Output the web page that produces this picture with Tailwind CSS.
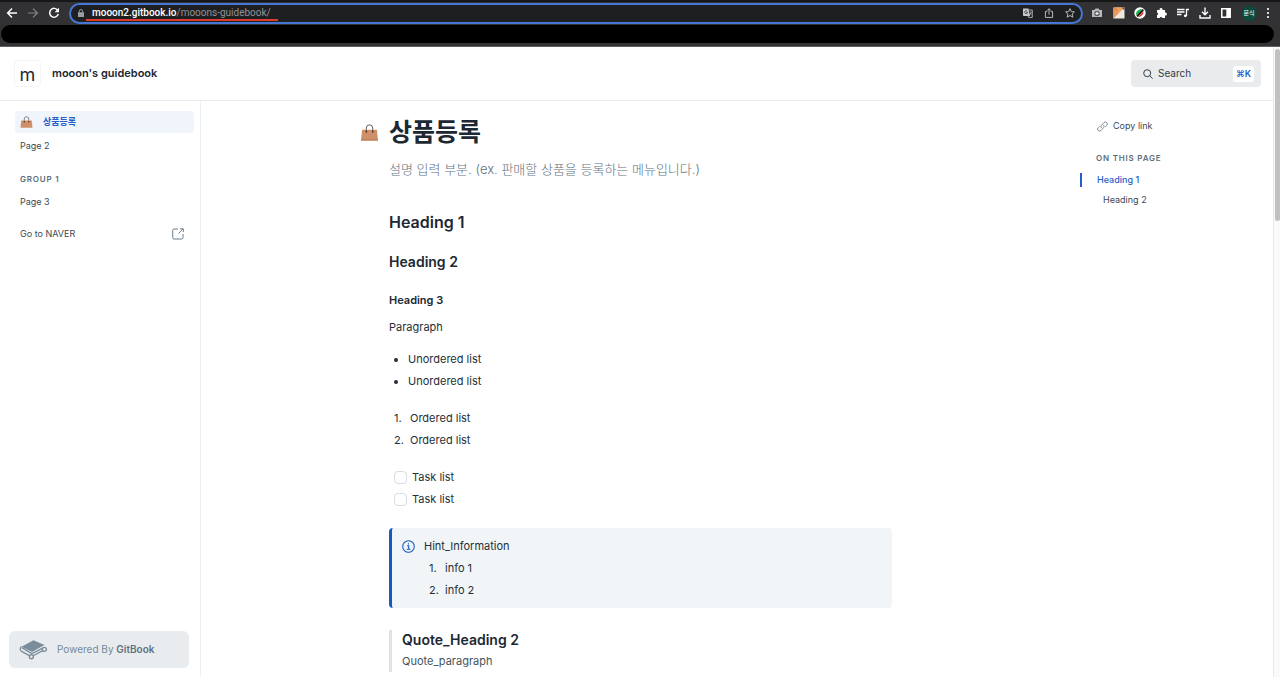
<!DOCTYPE html>
<html lang="ko">
<head>
    <meta charset="UTF-8">
    <meta name="viewport" content="width=device-width, initial-scale=1.0">
    <title>상품등록 - mooon's guidebook</title>
    <script src="https://cdn.jsdelivr.net/npm/@tailwindcss/browser@4"></script>
</head>
<body class="h-screen overflow-hidden flex flex-col bg-white font-['Inter','Noto_Sans_CJK_KR',sans-serif] text-[#242f38]">

    <!-- Browser toolbar -->
    <div class="shrink-0 bg-[#323234] border-t-2 border-t-[#161616] border-b border-b-[#606062]">
        <div class="flex items-center h-[22px] pr-[10px]">
            <div class="flex items-center gap-[9px] pl-[6px] pr-[9px]">
                <button type="button" aria-label="Back" class="text-white">
                    <svg class="size-3" viewBox="0 0 12 12" fill="none" stroke="currentColor" stroke-width="1.4"><path d="M11 6H2M6 1.6 1.6 6 6 10.4"/></svg>
                </button>
                <button type="button" aria-label="Forward" class="text-[#858587]">
                    <svg class="size-3" viewBox="0 0 12 12" fill="none" stroke="currentColor" stroke-width="1.2"><path d="M1 6h9M6 1.6 10.4 6 6 10.4"/></svg>
                </button>
                <button type="button" aria-label="Reload" class="text-white">
                    <svg class="size-3" viewBox="0 0 12 12" fill="none" stroke="currentColor" stroke-width="1.5"><path d="M9.8 3.4A4.4 4.4 0 1 0 10.3 7"/><path d="M11 .8v4.4H6.6z" fill="currentColor" stroke="none"/></svg>
                </button>
            </div>
            <div class="flex-1 h-[21px] flex items-center rounded-full border-2 border-[#4677d6] bg-[#1e1f21] pl-[6px] pr-[6px]">
                <svg class="w-2 h-2 mr-[7px] text-[#9a9da1]" viewBox="0 0 8 8" fill="currentColor"><path d="M1 3.2h6V8H1z"/><path d="M2.300 3.500V2.300a1.700 1.700 0 0 1 3.400 0v1.200" fill="none" stroke="currentColor"/></svg>
                <div class="border-b-2 border-[#e23a2c] -ml-[6px] pl-[6px] pr-[7px] h-[15px] leading-[14px] font-['Roboto',sans-serif] text-[10px] text-[#8f9296]"><span class="text-white font-medium">mooon2.gitbook.io</span>/mooons-guidebook/</div>
                <div class="ml-auto flex items-center gap-[11px] text-[#c9cacc]">
                    <button type="button" aria-label="Translate">
                        <svg class="size-[10px]" viewBox="0 0 10 10"><path d="M0 .5h5.500L7 8H.8a.8.8 0 0 1-.8-.8z" fill="#c9cacc"/><path d="M6 2h3.300v7.400H5.600L5 8" fill="none" stroke="#c9cacc" stroke-width=".8"/><path d="M4.300 3.200a1.500 1.500 0 1 0 .3 1.300H3.200" fill="none" stroke="#1e1f21" stroke-width=".7"/><path d="M6.800 4h2M8.300 4.200 6.900 6.800M7 5l1.400 1.800" fill="none" stroke="#c9cacc" stroke-width=".6"/></svg>
                    </button>
                    <button type="button" aria-label="Share">
                        <svg class="size-[10px]" viewBox="0 0 10 10" fill="none" stroke="currentColor" stroke-width=".9"><path d="M3.200 3.600H1.400v5.800h7.200V3.600H6.800M5 6.600V.9M3 2.700l2-2 2 2"/></svg>
                    </button>
                    <button type="button" aria-label="Bookmark">
                        <svg class="size-[10px]" viewBox="0 0 10 10" fill="none" stroke="currentColor" stroke-width=".9" stroke-linejoin="round"><path d="m5 .7 1.300 2.900 3.100.3-2.300 2.100.7 3.200L5 7.500 2.200 9.200l.7-3.200L.6 3.900l3.100-.3z"/></svg>
                    </button>
                </div>
            </div>
            <div class="w-[179px] ml-2 flex items-center justify-between text-white">
                <svg class="size-3" viewBox="0 0 12 12"><path d="M1 3h2.500l1-1.500h3l1 1.500H11v7H1z" fill="#b9babb"/><circle cx="6" cy="6.400" r="2.700" fill="#5d5e60"/><path d="M6 4.800V8M4.400 6.400h3.200" stroke="#fff"/></svg>
                <svg class="size-3" viewBox="0 0 12 12"><path d="M.5.5h11v11H.5z" fill="#f0e9df"/><path d="M.5.5H8l-7.500 11z" fill="#d98a4a"/><path d="M3 .5h8.500L6 6z" fill="#eda35c"/><path d="M.5.500 6 6 .5 11.500z" fill="#e9995a"/><path d="M8.500.5h3v3z" fill="#555"/></svg>
                <svg class="size-3" viewBox="0 0 12 12"><circle cx="6" cy="6" r="5.700" fill="#fff"/><path d="M2 8C1.500 4.500 4.500 2 8 2L4.500 7z" fill="#27b44a"/><path d="M9.500 4 4 10c3.500 0 5.500-2.500 5.500-6z" fill="#e5322d"/><path d="M9.300 2.600 3 9.300" stroke="#111" stroke-width="1.800"/></svg>
                <svg class="size-3" viewBox="0 0 12 12" fill="currentColor"><path d="M1 3h2.600a1.500 1.500 0 1 1 2.900 0H9v2.600a1.500 1.500 0 1 1 0 2.900V11H6.500a1.500 1.500 0 0 0-2.900 0H1V8.300a1.400 1.400 0 0 0 0-2.700z"/></svg>
                <svg class="size-3" viewBox="0 0 12 12" fill="none" stroke="currentColor" stroke-width="1.300"><path d="M0 2.500h7.500M0 5h7.500M0 7.500h4.500M9.500 9V2.500H12"/><circle cx="8.300" cy="8.800" r="1.400" fill="currentColor" stroke="none"/></svg>
                <svg class="size-3" viewBox="0 0 12 12" fill="none" stroke="currentColor" stroke-width="1.400"><path d="M6 .5v7M3 4.800l3 3 3-3M1 8v3h10V8"/></svg>
                <svg class="size-3" viewBox="0 0 12 12"><path d="M1.800 1.800h8.400v8.400H1.800z" fill="none" stroke="currentColor" stroke-width="1.500"/><path d="M6.300 2h4v8h-4z" fill="currentColor"/></svg>
                <span class="size-[15px] rounded-full bg-[#0b4a3c] flex items-center justify-center text-[6px] leading-none">문식</span>
                <svg class="w-1 h-3" viewBox="0 0 4 12" fill="currentColor"><circle cx="2" cy="2" r="1.100"/><circle cx="2" cy="6" r="1.100"/><circle cx="2" cy="10" r="1.100"/></svg>
            </div>
        </div>
        <div class="h-[18px] mt-[1px] mb-[3px] ml-[1px] mr-[6px] rounded-full bg-black"></div>
    </div>

    <div class="flex-1 min-h-0 flex">
        <div class="flex-1 min-w-0 flex flex-col">
            <header class="shrink-0 flex items-center h-[54px] pl-[14px] pr-3 border-b border-[#e7edf1]">
                <a href="#" class="flex items-center gap-[11px] text-[11px] font-semibold text-[#1c2833]">
                    <span class="size-[27px] flex items-center justify-center rounded-sm border border-[#f4f4f4] pt-[3px] text-[18px] leading-none font-normal">m</span>
                    mooon's guidebook
                </a>
                <button type="button" class="ml-auto flex items-center w-[130px] h-[27px] pl-3 pr-[7px] rounded bg-[#e9ebec] text-[10px] text-[#33404b]">
                    <svg class="size-[10px] mr-[5px]" viewBox="0 0 10 10" fill="none" stroke="currentColor"><circle cx="4.200" cy="4.200" r="3.500"/><path d="m6.800 6.800 2.800 2.800"/></svg>
                    Search
                    <kbd class="ml-auto flex items-center justify-center w-[21px] h-4 rounded-[3px] bg-white font-['Inter','DejaVu_Sans',sans-serif] text-[9px] font-semibold text-[#2560c9]">⌘K</kbd>
                </button>
            </header>

            <div class="flex-1 min-h-0 flex">
                <nav class="w-[201px] shrink-0 flex flex-col border-r border-[#eceff1] pt-[10px] text-[9px] text-[#3b4954]">
                    <a href="#" class="flex items-center h-[22px] ml-[15px] mr-[6px] pl-[5px] gap-[10px] rounded-sm bg-[#f0f4fb] font-bold text-[#2560c9]">
                        <svg class="w-[13px] h-3" viewBox="0 0 16 16"><path d="M5 8V4a3 3 0 0 1 6 0v4" fill="none" stroke="#6b6462"/><path d="M1 6h14l1 9.500H0z" fill="#cf9069"/><path d="M4.300 6.500h1.500v2H4.300zM10.300 6.500h1.500v2h-1.500z" fill="#4a2f25"/></svg>
                        상품등록
                    </a>
                    <a href="#" class="flex items-center h-[22px] mt-[2px] pl-5">Page 2</a>
                    <h5 class="flex items-center h-[22px] mt-[11px] pl-5 text-[8px] font-semibold tracking-widest text-[#5b6d7b]">GROUP 1</h5>
                    <a href="#" class="flex items-center h-[22px] mt-[1px] pl-5">Page 3</a>
                    <a href="#" class="flex items-center justify-between h-[22px] mt-[10px] pl-5 pr-4">
                        Go to NAVER
                        <svg class="size-3" viewBox="0 0 12 12" fill="none" stroke="#6d7d8a"><path d="M6 1H2A1.300 1.300 0 0 0 .7 2.300v7.400A1.300 1.300 0 0 0 2 11h7.700a1.300 1.300 0 0 0 1.300-1.300V6M6.500 5.500 11 1M8 .8h3.300V4"/></svg>
                    </a>
                    <a href="#" class="mt-auto mb-[9px] ml-[9px] mr-[11px] h-[37px] flex items-center pl-[10px] rounded-md bg-[#e8ecef] text-[10px] text-[#76899a]">
                        <svg class="w-7 h-5 mr-[10px]" viewBox="0 0 28 20"><path d="M14.500.3 25.500 5 13.800 11.600a1.600 1.600 0 0 1-1.500 0L2.500 6.700z" fill="#7b8d9b"/><path d="M2.600 6.500C.7 7.300.9 10.600 2.600 11.400l7.800 4.200M14.300 15.700l9.300-5.100M2.800 7.600l8.800 5.300c1 .5 1.900.4 2.800-.1l9.200-4.700" fill="none" stroke="#7b8d9b" stroke-width="1.300"/><circle cx="12.400" cy="16.800" r="2" fill="#e8ecef" stroke="#7b8d9b" stroke-width="1.400"/><circle cx="25.400" cy="9.400" r="2" fill="#e8ecef" stroke="#7b8d9b" stroke-width="1.400"/></svg>
                        <span>Powered By <b class="font-semibold text-[#5f7281]">GitBook</b></span>
                    </a>
                </nav>

                <main class="flex-1 min-w-0 pt-[15px]">
                    <article class="w-full max-w-[503px] mx-auto text-[11px] leading-[22px]">
                        <h1 class="relative text-[25px] leading-8 font-bold text-[#1c2833]">
                            <svg class="absolute -left-7 top-2 size-[17px]" viewBox="0 0 16 16"><path d="M5 8V3.800a3 3 0 0 1 6 0V8" fill="none" stroke="#5d5654" stroke-width=".9"/><path d="M1 5.500h14l1 10H0z" fill="#cf9069"/><path d="M0 14.500h16v1H0z" fill="#b9764f"/><path d="M4.300 6.200h1.400V8H4.300zM10.300 6.200h1.400V8h-1.400z" fill="#3c2720"/></svg>
                            상품등록
                        </h1>
                        <p class="mt-[11px] text-[13px] leading-5 font-light text-[#5f7281]">설명 입력 부분. (ex. 판매할 상품을 등록하는 메뉴입니다.)</p>

                        <h2 class="mt-[31px] text-[16px] leading-6 font-semibold text-[#1c2833]">Heading 1</h2>
                        <h3 class="mt-[18px] text-[14px] leading-5 font-semibold text-[#1c2833]">Heading 2</h3>
                        <h4 class="mt-[18px] leading-5 font-semibold text-[#1c2833]">Heading 3</h4>
                        <p class="mt-[6px]">Paragraph</p>

                        <ul class="mt-[10px] pl-[19px] list-disc">
                            <li>Unordered list</li>
                            <li>Unordered list</li>
                        </ul>

                        <ol class="mt-[15px] pl-[5px]">
                            <li class="flex"><span class="w-4">1.</span>Ordered list</li>
                            <li class="flex"><span class="w-4">2.</span>Ordered list</li>
                        </ol>

                        <div class="mt-[15px] pl-[5px]">
                            <label class="flex items-center gap-[5px]"><input type="checkbox" class="appearance-none size-[13px] rounded-sm border border-[#d5dce3] bg-white">Task list</label>
                            <label class="flex items-center gap-[5px]"><input type="checkbox" class="appearance-none size-[13px] rounded-sm border border-[#d5dce3] bg-white">Task list</label>
                        </div>

                        <div class="mt-[18px] flex py-[7px] pl-[10px] gap-[9px] rounded-sm border-l-3 border-[#1657c4] bg-[#f1f5f8]">
                            <svg class="size-[13px] mt-[5px] shrink-0" viewBox="0 0 13 13" fill="none" stroke="#1657c4" stroke-width="1.100"><circle cx="6.500" cy="6.500" r="5.800"/><path d="M5 5.700h1.700v3.600M4.800 9.300h3.700M6.500 3.200v1.200"/></svg>
                            <div>
                                <p>Hint_Information</p>
                                <ol class="pl-[5px]">
                                    <li class="flex"><span class="w-4">1.</span>info 1</li>
                                    <li class="flex"><span class="w-4">2.</span>info 2</li>
                                </ol>
                            </div>
                        </div>

                        <blockquote class="mt-[22px] pl-[10px] border-l-3 border-[#dfe3e7]">
                            <h3 class="text-[14px] leading-5 font-semibold text-[#1c2833]">Quote_Heading 2</h3>
                            <p class="text-[#46535e]">Quote_paragraph</p>
                        </blockquote>
                    </article>
                </main>

                <aside class="w-[193px] shrink-0 pt-[15px] text-[9px] leading-5 text-[#3b4954]">
                    <button type="button" class="flex items-center gap-[5px] ml-[17px]">
                        <svg class="size-[11px]" viewBox="0 0 12 12" fill="none" stroke="#5f7281" stroke-width=".9"><path d="M5 7.700a2.200 2.200 0 0 1-.1-3.100l2.800-2.900a2.100 2.100 0 0 1 3 3L9.200 6.200M7 4.300a2.200 2.200 0 0 1 .1 3.100l-2.800 2.900a2.100 2.100 0 0 1-3-3L2.800 5.800"/></svg>
                        Copy link
                    </button>
                    <h5 class="mt-3 ml-4 text-[8px] leading-5 font-semibold tracking-widest text-[#5b6d7b]">ON THIS PAGE</h5>
                    <ul>
                        <li class="mt-[5px]"><a href="#" class="block border-l-2 border-[#2560c9] pl-[15px] leading-[14px] font-medium text-[#2560c9]">Heading 1</a></li>
                        <li class="mt-[3px]"><a href="#" class="block pl-[23px]">Heading 2</a></li>
                    </ul>
                </aside>
            </div>
        </div>

        <!-- Scrollbar -->
        <div class="w-[7px] shrink-0 pt-[2px] pl-[1px] border-l border-[#e8e8e8] bg-[#fafafa]">
            <div class="h-[172px] rounded-sm bg-[#c1c1c1]"></div>
        </div>
    </div>
</body>
</html>
